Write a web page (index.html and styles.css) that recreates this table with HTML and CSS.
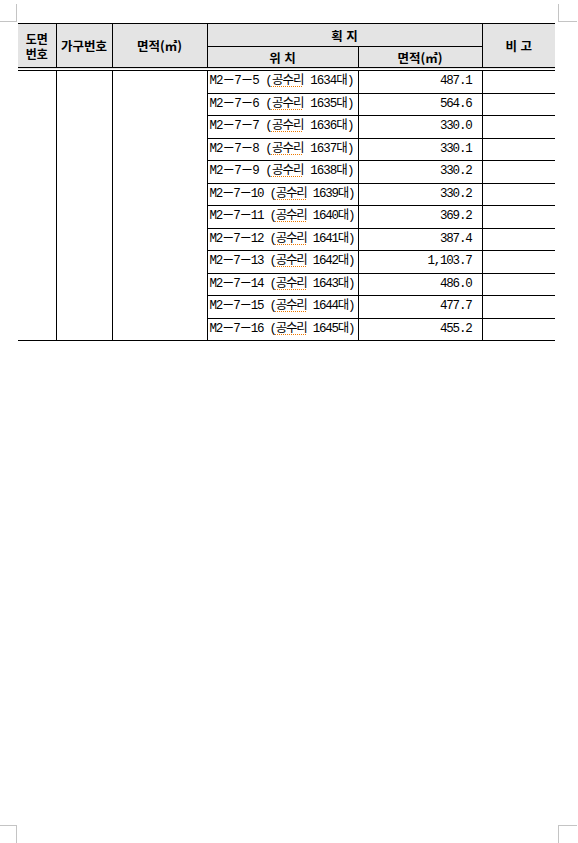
FILE: index.html
```html
<!DOCTYPE html>
<html lang="ko">
<head>
<meta charset="utf-8">
<title>획지 조서</title>
<link rel="stylesheet" href="styles.css">
</head>
<body>
<div class="page">
  <span class="mark tl"></span>
  <span class="mark tr"></span>
  <span class="mark bl"></span>
  <span class="mark br"></span>
  <div class="sheet">
    <table class="grid">
      <colgroup>
        <col class="c1"><col class="c2"><col class="c3"><col class="c4"><col class="c5"><col class="c6">
      </colgroup>
      <thead>
        <tr class="h1">
          <th rowspan="2" class="edge-l"><span class="ln">도면</span><span class="ln">번호</span></th>
          <th rowspan="2">가구번호</th>
          <th rowspan="2">면적(㎡)</th>
          <th colspan="2">획 지</th>
          <th rowspan="2" class="edge-r">비 고</th>
        </tr>
        <tr class="h2">
          <th>위 치</th>
          <th>면적(㎡)</th>
        </tr>
      </thead>
      <tbody>
        <tr><td rowspan="12" class="edge-l"></td><td rowspan="12"></td><td rowspan="12"></td><td class="loc">M2－7－5 (<span class="sp">공수리</span> 1634대)</td><td class="num">487.1</td><td class="edge-r"></td></tr>
        <tr><td class="loc">M2－7－6 (<span class="sp">공수리</span> 1635대)</td><td class="num">564.6</td><td class="edge-r"></td></tr>
        <tr><td class="loc">M2－7－7 (<span class="sp">공수리</span> 1636대)</td><td class="num">330.0</td><td class="edge-r"></td></tr>
        <tr><td class="loc">M2－7－8 (<span class="sp">공수리</span> 1637대)</td><td class="num">330.1</td><td class="edge-r"></td></tr>
        <tr><td class="loc">M2－7－9 (<span class="sp">공수리</span> 1638대)</td><td class="num">330.2</td><td class="edge-r"></td></tr>
        <tr><td class="loc tight">M2－7－10 (<span class="sp">공수리</span> 1639대)</td><td class="num">330.2</td><td class="edge-r"></td></tr>
        <tr><td class="loc tight">M2－7－11 (<span class="sp">공수리</span> 1640대)</td><td class="num">369.2</td><td class="edge-r"></td></tr>
        <tr><td class="loc tight">M2－7－12 (<span class="sp">공수리</span> 1641대)</td><td class="num">387.4</td><td class="edge-r"></td></tr>
        <tr><td class="loc tight">M2－7－13 (<span class="sp">공수리</span> 1642대)</td><td class="num">1,103.7</td><td class="edge-r"></td></tr>
        <tr><td class="loc tight">M2－7－14 (<span class="sp">공수리</span> 1643대)</td><td class="num">486.0</td><td class="edge-r"></td></tr>
        <tr><td class="loc tight">M2－7－15 (<span class="sp">공수리</span> 1644대)</td><td class="num">477.7</td><td class="edge-r"></td></tr>
        <tr><td class="loc tight">M2－7－16 (<span class="sp">공수리</span> 1645대)</td><td class="num">455.2</td><td class="edge-r"></td></tr>
      </tbody>
    </table>
  </div>
</div>
</body>
</html>
```

FILE: styles.css
```css
html, body {
  margin: 0;
  padding: 0;
  background: #ffffff;
}

.page {
  position: relative;
  width: 578px;
  height: 843px;
  overflow: hidden;
}

.mark {
  position: absolute;
  border: 0 solid #c4c4c4;
}
.mark.tl { left: 0; top: 4px; width: 16px; height: 17px; border-right-width: 1px; border-bottom-width: 1px; }
.mark.tr { left: 558px; top: 4px; width: 18px; height: 17px; border-left-width: 1px; border-bottom-width: 1px; }
.mark.bl { left: 0; top: 825px; width: 16px; height: 18px; border-right-width: 1px; border-top-width: 1px; }
.mark.br { left: 558px; top: 825px; width: 18px; height: 18px; border-left-width: 1px; border-top-width: 1px; }

.sheet {
  padding: 23px 0 0 18px;
}

.grid {
  border-collapse: collapse;
  table-layout: fixed;
  width: 537px;
  font-family: "Liberation Mono", "Noto Sans CJK KR", monospace;
  font-size: 12.5px;
  color: #000;
}

.c1 { width: 38px; }
.c2 { width: 56px; }
.c3 { width: 95px; }
.c4 { width: 151px; }
.c5 { width: 124px; }
.c6 { width: 73px; }

.grid th {
  background: #e4e4e4;
  font-family: "Noto Sans CJK KR", sans-serif;
  font-weight: bold;
  font-size: 12.5px;
  line-height: 15px;
  border: 1px solid #000;
  padding: 0;
  text-align: center;
  vertical-align: middle;
}

.ln {
  display: block;
  line-height: 15px;
  height: 15px;
  font-size: 12px;
}

.h1 th { height: 22px; }
.h2 th { height: 20px; border-bottom: 4px double #000; }
.h1 th[rowspan] { border-bottom: 4px double #000; }

.grid td {
  border: 1px solid #000;
  padding: 0;
  height: 21.5px;
  line-height: 15px;
  vertical-align: middle;
  white-space: nowrap;
  overflow: hidden;
}

.grid .edge-l { border-left: none; }
.grid .edge-r { border-right: none; }

.loc {
  padding-left: 2px !important;
  letter-spacing: -0.95px;
}
.loc.tight { letter-spacing: -1.25px; }

.sp {
  text-decoration: underline dotted #ee7a00;
  text-decoration-thickness: 1px;
  text-underline-offset: 2px;
}

.num {
  text-align: right;
  padding-right: 10px !important;
  letter-spacing: -1.2px;
}
```
